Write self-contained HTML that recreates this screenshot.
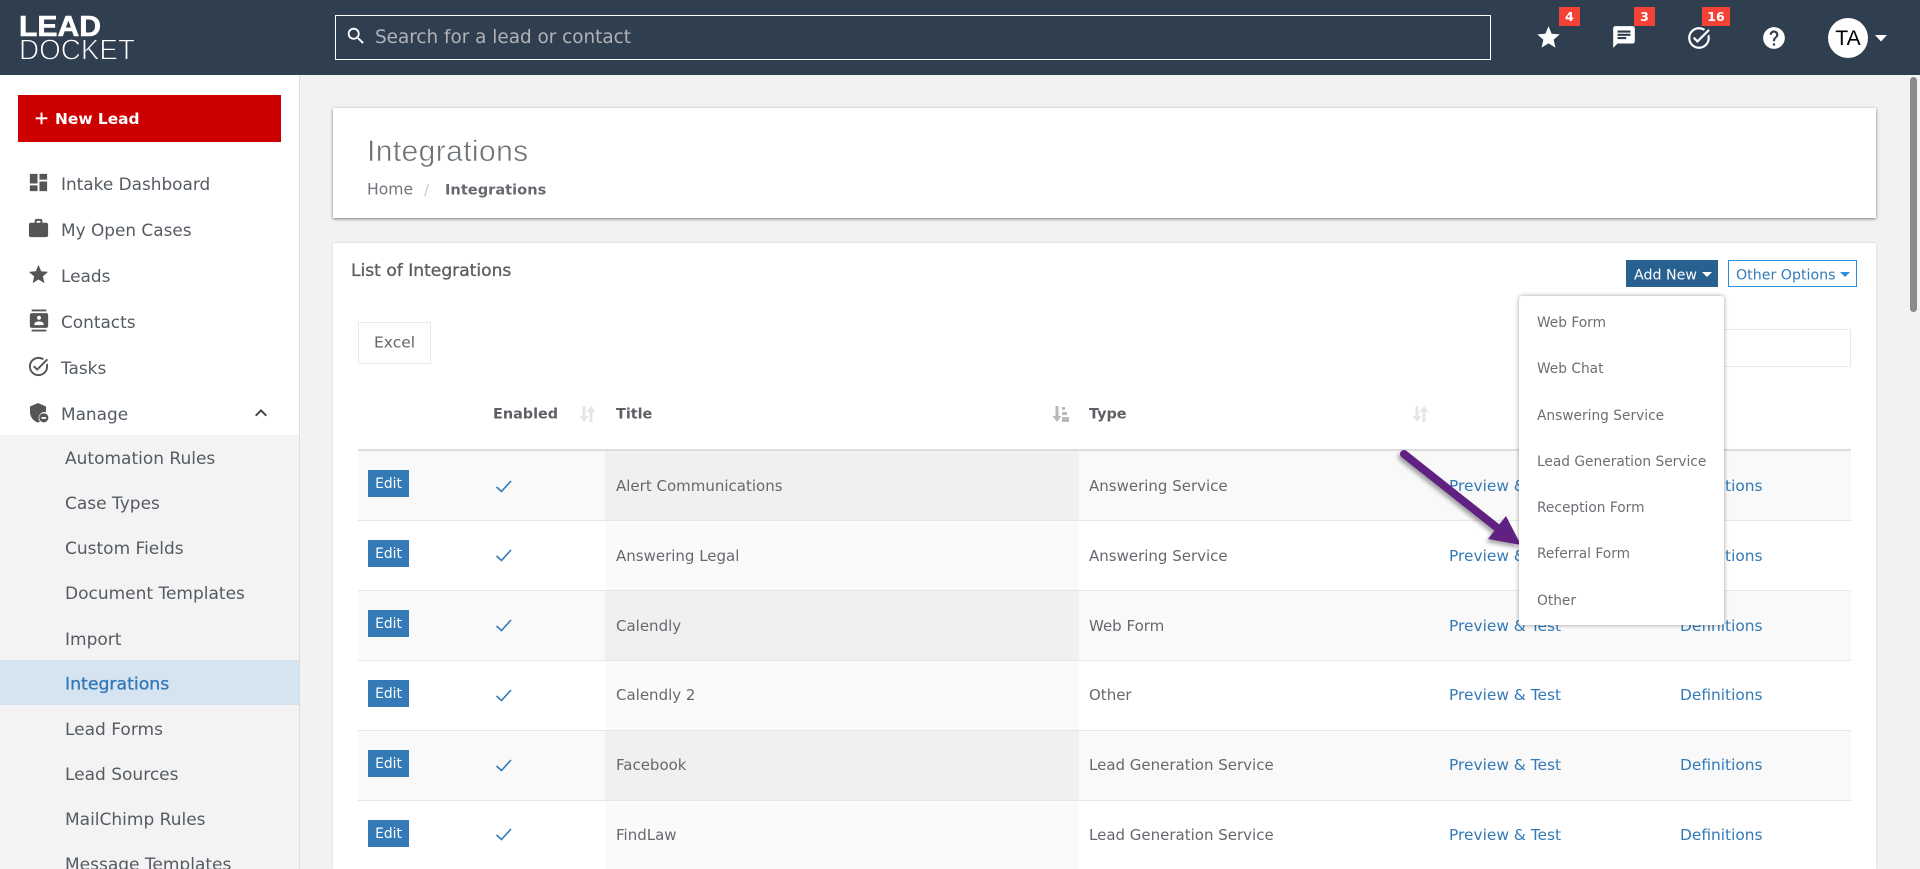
<!DOCTYPE html>
<html><head><meta charset="utf-8"><title>Integrations</title>
<style>
html,body{margin:0;padding:0;width:1920px;height:869px;overflow:hidden;background:#f2f2f2}
body{position:relative;font-family:"DejaVu Sans","Liberation Sans",sans-serif;color:#5f6368}
.a{position:absolute}
.t{position:absolute;white-space:nowrap;transform:translateY(calc(-50% + 1px));line-height:1.2}
svg.i{position:absolute;overflow:visible}
.s{font-size:16.9px;color:#555b63;left:61px}
.u{font-size:17px;color:#555b63;left:65px}
.r{font-size:15px;color:#65696e}
.l{font-size:15.4px;color:#337ab7}
.m{font-size:13.75px;color:#6b6f74;left:1537px}
.b{position:absolute;left:368px;width:41px;height:27px;background:#337ab7;color:#fff;font-size:13.8px;line-height:28px;text-align:center}
.h{font-size:14.4px;font-weight:bold;color:#5c5f63}
.bd{position:absolute;background:#f44336;color:#fff;font-size:12.5px;font-weight:bold;text-align:center;top:7px;height:19px;line-height:19px}
</style></head><body>

<!-- header -->
<div class="a" style="left:0;top:0;width:1920px;height:75px;background:#303f50"></div>
<svg class="a" style="left:0;top:0" width="160" height="75">
<text x="19" y="36" font-family="Liberation Sans" font-weight="bold" font-size="29" fill="#fff" stroke="#fff" stroke-width=".6" textLength="82" lengthAdjust="spacingAndGlyphs">LEAD</text>
<text x="19" y="59.5" font-family="Liberation Sans" font-size="29" fill="#fff" stroke="#303f50" stroke-width=".9" paint-order="fill stroke" textLength="116" lengthAdjust="spacingAndGlyphs">DOCKET</text>
</svg>
<div class="a" style="left:335px;top:15px;width:1154px;height:43px;border:1.5px solid #fff"></div>
<svg class="i" style="left:345px;top:25px" width="22" height="22" viewBox="0 0 24 24"><path fill="#fff" d="M15.5 14h-.79l-.28-.27C15.41 12.59 16 11.11 16 9.5 16 5.91 13.09 3 9.5 3S3 5.91 3 9.5 5.91 16 9.5 16c1.61 0 3.09-.59 4.23-1.57l.27.28v.79l5 4.99L20.49 19l-4.99-5zm-6 0C7.01 14 5 11.99 5 9.5S7.01 5 9.5 5 14 7.01 14 9.5 11.99 14 9.5 14z"/></svg>
<div class="t" style="left:375px;top:37px;font-size:18.4px;color:#b0b3b6">Search for a lead or contact</div>

<svg class="i" style="left:1535px;top:24px" width="27" height="27" viewBox="0 0 24 24"><path fill="#fff" d="M12 17.27L18.18 21l-1.64-7.03L22 9.24l-7.19-.61L12 2 9.19 8.63 2 9.24l5.46 4.73L5.82 21z"/></svg>
<div class="bd" style="left:1559px;width:21px">4</div>
<svg class="i" style="left:1611px;top:24px" width="26" height="26" viewBox="0 0 24 24"><path fill="#fff" d="M20 2H4c-1.1 0-1.99.9-1.99 2L2 22l4-4h14c1.1 0 2-.9 2-2V4c0-1.1-.9-2-2-2zM6 9h12v2H6V9zm8 5H6v-2h8v2zm4-6H6V6h12v2z"/></svg>
<div class="bd" style="left:1634px;width:21px">3</div>
<svg class="i" style="left:1686px;top:25px" width="26" height="26" viewBox="0 0 24 24"><path fill="#fff" d="M22 5.18L10.59 16.6l-4.24-4.24 1.41-1.41 2.83 2.83 10-10L22 5.18zm-2.21 5.04c.13.57.21 1.17.21 1.78 0 4.42-3.58 8-8 8s-8-3.58-8-8 3.58-8 8-8c1.58 0 3.04.46 4.28 1.25l1.44-1.44C16.1 2.67 14.13 2 12 2 6.48 2 2 6.48 2 12s4.48 10 10 10 10-4.48 10-10c0-1.19-.22-2.33-.6-3.39l-1.61 1.61z"/></svg>
<div class="bd" style="left:1702px;width:28px">16</div>
<svg class="i" style="left:1761px;top:25px" width="26" height="26" viewBox="0 0 24 24"><path fill="#fff" d="M12 2C6.48 2 2 6.48 2 12s4.48 10 10 10 10-4.48 10-10S17.52 2 12 2zm1 17h-2v-2h2v2zm2.07-7.75l-.9.92C13.45 12.9 13 13.5 13 15h-2v-.5c0-1.1.45-2.1 1.17-2.83l1.24-1.26c.37-.36.59-.86.59-1.41 0-1.1-.9-2-2-2s-2 .9-2 2H8c0-2.21 1.79-4 4-4s4 1.79 4 4c0 .88-.36 1.68-.93 2.25z"/></svg>
<div class="a" style="left:1828px;top:18px;width:40px;height:40px;border-radius:50%;background:#fff;color:#000;font:21px/41px 'Liberation Sans',sans-serif;text-align:center">TA</div>
<svg class="i" style="left:1875px;top:35px" width="12" height="7"><path fill="#fff" d="M0 0h12L6 6.5z"/></svg>

<!-- sidebar -->
<div class="a" style="left:0;top:75px;width:299px;height:794px;background:#fff;border-right:1.5px solid #ddd"></div>
<div class="a" style="left:0;top:435px;width:299px;height:434px;background:#f3f3f3"></div>
<div class="a" style="left:0;top:660px;width:299px;height:45px;background:#d6e3f1"></div>
<div class="a" style="left:18px;top:95px;width:263px;height:47px;background:#cc0000"></div>
<div class="t" style="left:34px;top:118px;font-size:18px;color:#fff;-webkit-text-stroke:.4px #fff">+</div>
<div class="t" style="left:55px;top:118px;font-size:15.4px;font-weight:bold;color:#fff">New Lead</div>

<svg class="i" style="left:27px;top:171px" width="23" height="23" viewBox="0 0 24 24"><path fill="#555" d="M3 13h8V3H3v10zm0 8h8v-6H3v6zm10 0h8V11h-8v10zm0-18v6h8V3h-8z"/></svg>
<div class="t s" style="top:182.5px">Intake Dashboard</div>
<svg class="i" style="left:27px;top:217px" width="23" height="23" viewBox="0 0 24 24"><path fill="#555" d="M20 6h-4V4c0-1.11-.89-2-2-2h-4c-1.11 0-2 .89-2 2v2H4c-1.11 0-1.99.89-1.99 2L2 19c0 1.11.89 2 2 2h16c1.11 0 2-.89 2-2V8c0-1.11-.89-2-2-2zm-6 0h-4V4h4v2z"/></svg>
<div class="t s" style="top:228.5px">My Open Cases</div>
<svg class="i" style="left:27px;top:263px" width="23" height="23" viewBox="0 0 24 24"><path fill="#555" d="M12 17.27L18.18 21l-1.64-7.03L22 9.24l-7.19-.61L12 2 9.19 8.63 2 9.24l5.46 4.73L5.82 21z"/></svg>
<div class="t s" style="top:274.5px">Leads</div>
<svg class="i" style="left:28px;top:309px" width="22" height="23" viewBox="0 0 24 24"><path fill="#555" d="M20 0H4v2h16V0zM4 24h16v-2H4v2zM20 4H4c-1.1 0-2 .9-2 2v12c0 1.1.9 2 2 2h16c1.1 0 2-.9 2-2V6c0-1.1-.9-2-2-2zm-8 2.75c1.24 0 2.25 1.01 2.25 2.25s-1.01 2.25-2.25 2.25S9.75 10.24 9.75 9 10.76 6.75 12 6.75zM17 17H7v-1.5c0-1.67 3.33-2.5 5-2.5s5 .83 5 2.5V17z"/></svg>
<div class="t s" style="top:320.5px">Contacts</div>
<svg class="i" style="left:27px;top:355px" width="23" height="23" viewBox="0 0 24 24"><path fill="#555" d="M22 5.18L10.59 16.6l-4.24-4.24 1.41-1.41 2.83 2.83 10-10L22 5.18zm-2.21 5.04c.13.57.21 1.17.21 1.78 0 4.42-3.58 8-8 8s-8-3.58-8-8 3.58-8 8-8c1.58 0 3.04.46 4.28 1.25l1.44-1.44C16.1 2.67 14.13 2 12 2 6.48 2 2 6.48 2 12s4.48 10 10 10 10-4.48 10-10c0-1.19-.22-2.33-.6-3.39l-1.61 1.61z"/></svg>
<div class="t s" style="top:366.5px">Tasks</div>
<svg class="i" style="left:28px;top:402px" width="22" height="22" viewBox="0 0 22 22"><path fill="#555" d="M10 1L2 4.5V10c0 4.8 3.2 9 8 10.5.7-.2 1.3-.5 1.9-.8A6 6 0 0 1 18 10.2V4.5z"/><circle cx="15.8" cy="15.8" r="4.6" fill="#555"/><rect x="13.5" y="15" width="4.6" height="1.8" fill="#fff"/></svg>
<div class="t s" style="top:412.5px">Manage</div>
<svg class="i" style="left:249px;top:401px" width="24" height="24" viewBox="0 0 24 24"><path fill="#444" d="M12 8l-6 6 1.41 1.41L12 10.83l4.59 4.58L18 14z"/></svg>

<div class="t u" style="top:457.5px">Automation Rules</div>
<div class="t u" style="top:502.5px">Case Types</div>
<div class="t u" style="top:547.5px">Custom Fields</div>
<div class="t u" style="top:593px">Document Templates</div>
<div class="t u" style="top:638.5px">Import</div>
<div class="t u" style="top:684px;color:#337ab7;font-size:17.3px;-webkit-text-stroke:.35px #337ab7">Integrations</div>
<div class="t u" style="top:728.5px">Lead Forms</div>
<div class="t u" style="top:773.5px">Lead Sources</div>
<div class="t u" style="top:818.5px">MailChimp Rules</div>
<div class="t u" style="top:864px">Message Templates</div>

<!-- scrollbar -->
<div class="a" style="left:1910px;top:77px;width:7px;height:235px;border-radius:4px;background:#8a8a8a"></div>

<!-- card 1 -->
<div class="a" style="left:333px;top:108px;width:1543px;height:110px;background:#fff;box-shadow:0 1px 3px rgba(0,0,0,.5)"></div>
<svg class="a" style="left:360px;top:125px" width="200" height="50"><text x="7" y="36" font-family="Liberation Sans" font-size="30" letter-spacing=".4" fill="#6f7478" stroke="#fff" stroke-width=".5" paint-order="fill stroke">Integrations</text></svg>
<div class="t" style="left:367px;top:189px;font-size:15.6px;color:#70757a">Home</div>
<div class="t" style="left:424px;top:189px;font-size:15px;color:#ccc">/</div>
<div class="t" style="left:445px;top:189px;font-size:14.6px;font-weight:bold;color:#65696e">Integrations</div>

<!-- card 2 -->
<div class="a" style="left:333px;top:243px;width:1543px;height:626px;background:#fff;box-shadow:0 0 2px rgba(0,0,0,.15)"></div>
<div class="t" style="left:351px;top:270px;font-size:17.1px;color:#5c5f63;-webkit-text-stroke:.35px #5c5f63">List of Integrations</div>
<div class="a" style="left:1626px;top:260px;width:92px;height:27px;background:#286090"></div>
<div class="t" style="left:1634px;top:275px;font-size:14.2px;color:#fff">Add New</div>
<svg class="i" style="left:1702px;top:272px" width="10" height="6"><path fill="#fff" d="M0 0h10L5 5z"/></svg>
<div class="a" style="left:1728px;top:260px;width:127px;height:25px;border:1.5px solid #2e8fd6;background:#fff"></div>
<div class="t" style="left:1736px;top:275px;font-size:14.2px;color:#337ab7">Other Options</div>
<svg class="i" style="left:1840px;top:272px" width="10" height="6"><path fill="#2e8fd6" d="M0 0h10L5 5z"/></svg>

<div class="a" style="left:358px;top:322px;width:71px;height:40px;border:1.5px solid #e9e9e9"></div>
<div class="t" style="left:374px;top:342px;font-size:15.5px;color:#666">Excel</div>
<div class="a" style="left:1700px;top:329px;width:149px;height:36px;border:1.5px solid #e9e9e9"></div>

<!-- table header -->
<div class="t h" style="left:493px;top:414px">Enabled</div>
<div class="t h" style="left:616px;top:414px">Title</div>
<div class="t h" style="left:1089px;top:414px">Type</div>
<svg class="i" style="left:579px;top:406px" width="17" height="17"><path fill="#e6e6e6" d="M3.5 0h3v10h3L5 16 .5 10h3zM10.5 16h3V6h3L12 0 7.5 6h3z"/></svg>
<svg class="i" style="left:1052px;top:406px" width="17" height="17"><path fill="#b9b9b9" d="M3.5 0h3v10h3L5 16 .5 10h3zM10 1h3v3h-3zM10 6h5v3h-5zM10 11h7v5h-7z"/></svg>
<svg class="i" style="left:1412px;top:406px" width="17" height="17"><path fill="#e6e6e6" d="M3.5 0h3v10h3L5 16 .5 10h3zM10.5 16h3V6h3L12 0 7.5 6h3z"/></svg>
<div class="a" style="left:358px;top:449px;width:1493px;height:2px;background:#ddd"></div>

<!-- rows -->
<div class="a" style="left:358px;top:451px;width:1493px;height:69px;background:#f9f9f9"></div>
<div class="a" style="left:605px;top:451px;width:474px;height:69px;background:#f0f0f0"></div>
<div class="a" style="left:605px;top:521px;width:474px;height:69px;background:#fafafa"></div>
<div class="a" style="left:358px;top:591px;width:1493px;height:69px;background:#f9f9f9"></div>
<div class="a" style="left:605px;top:591px;width:474px;height:69px;background:#f0f0f0"></div>
<div class="a" style="left:605px;top:661px;width:474px;height:69px;background:#fafafa"></div>
<div class="a" style="left:358px;top:731px;width:1493px;height:69px;background:#f9f9f9"></div>
<div class="a" style="left:605px;top:731px;width:474px;height:69px;background:#f0f0f0"></div>
<div class="a" style="left:605px;top:801px;width:474px;height:68px;background:#fafafa"></div>
<div class="a" style="left:358px;top:520px;width:1493px;height:1px;background:#e7e7e7"></div>
<div class="a" style="left:358px;top:590px;width:1493px;height:1px;background:#e7e7e7"></div>
<div class="a" style="left:358px;top:660px;width:1493px;height:1px;background:#e7e7e7"></div>
<div class="a" style="left:358px;top:730px;width:1493px;height:1px;background:#e7e7e7"></div>
<div class="a" style="left:358px;top:800px;width:1493px;height:1px;background:#e7e7e7"></div>

<div class="b" style="top:470px">Edit</div>
<svg class="i" style="left:496px;top:480px" width="16" height="13"><path fill="none" stroke="#337ab7" stroke-width="1.6" d="M.5 7l5 4.5L15 1"/></svg>
<div class="t r" style="left:616px;top:484.5px">Alert Communications</div>
<div class="t r" style="left:1089px;top:484.5px">Answering Service</div>
<div class="t l" style="left:1449px;top:484.5px">Preview &amp; Test</div>
<div class="t l" style="left:1680px;top:484.5px">Definitions</div>

<div class="b" style="top:540px">Edit</div>
<svg class="i" style="left:496px;top:549px" width="16" height="13"><path fill="none" stroke="#337ab7" stroke-width="1.6" d="M.5 7l5 4.5L15 1"/></svg>
<div class="t r" style="left:616px;top:554.5px">Answering Legal</div>
<div class="t r" style="left:1089px;top:554.5px">Answering Service</div>
<div class="t l" style="left:1449px;top:554.5px">Preview &amp; Test</div>
<div class="t l" style="left:1680px;top:554.5px">Definitions</div>

<div class="b" style="top:610px">Edit</div>
<svg class="i" style="left:496px;top:619px" width="16" height="13"><path fill="none" stroke="#337ab7" stroke-width="1.6" d="M.5 7l5 4.5L15 1"/></svg>
<div class="t r" style="left:616px;top:624.5px">Calendly</div>
<div class="t r" style="left:1089px;top:624.5px">Web Form</div>
<div class="t l" style="left:1449px;top:624.5px">Preview &amp; Test</div>
<div class="t l" style="left:1680px;top:624.5px">Definitions</div>

<div class="b" style="top:680px">Edit</div>
<svg class="i" style="left:496px;top:689px" width="16" height="13"><path fill="none" stroke="#337ab7" stroke-width="1.6" d="M.5 7l5 4.5L15 1"/></svg>
<div class="t r" style="left:616px;top:693.5px">Calendly 2</div>
<div class="t r" style="left:1089px;top:693.5px">Other</div>
<div class="t l" style="left:1449px;top:693.5px">Preview &amp; Test</div>
<div class="t l" style="left:1680px;top:693.5px">Definitions</div>

<div class="b" style="top:750px">Edit</div>
<svg class="i" style="left:496px;top:759px" width="16" height="13"><path fill="none" stroke="#337ab7" stroke-width="1.6" d="M.5 7l5 4.5L15 1"/></svg>
<div class="t r" style="left:616px;top:763.5px">Facebook</div>
<div class="t r" style="left:1089px;top:763.5px">Lead Generation Service</div>
<div class="t l" style="left:1449px;top:763.5px">Preview &amp; Test</div>
<div class="t l" style="left:1680px;top:763.5px">Definitions</div>

<div class="b" style="top:820px">Edit</div>
<svg class="i" style="left:496px;top:828px" width="16" height="13"><path fill="none" stroke="#337ab7" stroke-width="1.6" d="M.5 7l5 4.5L15 1"/></svg>
<div class="t r" style="left:616px;top:833.5px">FindLaw</div>
<div class="t r" style="left:1089px;top:833.5px">Lead Generation Service</div>
<div class="t l" style="left:1449px;top:833.5px">Preview &amp; Test</div>
<div class="t l" style="left:1680px;top:833.5px">Definitions</div>

<!-- arrow -->
<svg class="a" style="left:1390px;top:440px;filter:drop-shadow(-2px 3px 2px rgba(0,0,0,.35))" width="140" height="115" viewBox="1390 440 140 115"><path d="M1404 454L1500 530" stroke="#612183" stroke-width="8" stroke-linecap="round" fill="none"/><path fill="#612183" d="M1506 516L1521 545L1488 539z"/></svg>

<!-- dropdown -->
<div class="a" style="left:1519px;top:296px;width:205px;height:329px;background:#fff;border-radius:3px;box-shadow:0 0 4px rgba(0,0,0,.4)"></div>
<div class="t m" style="top:322px">Web Form</div>
<div class="t m" style="top:368px">Web Chat</div>
<div class="t m" style="top:415px">Answering Service</div>
<div class="t m" style="top:461px">Lead Generation Service</div>
<div class="t m" style="top:507px">Reception Form</div>
<div class="t m" style="top:553px">Referral Form</div>
<div class="t m" style="top:600px">Other</div>

</body></html>
